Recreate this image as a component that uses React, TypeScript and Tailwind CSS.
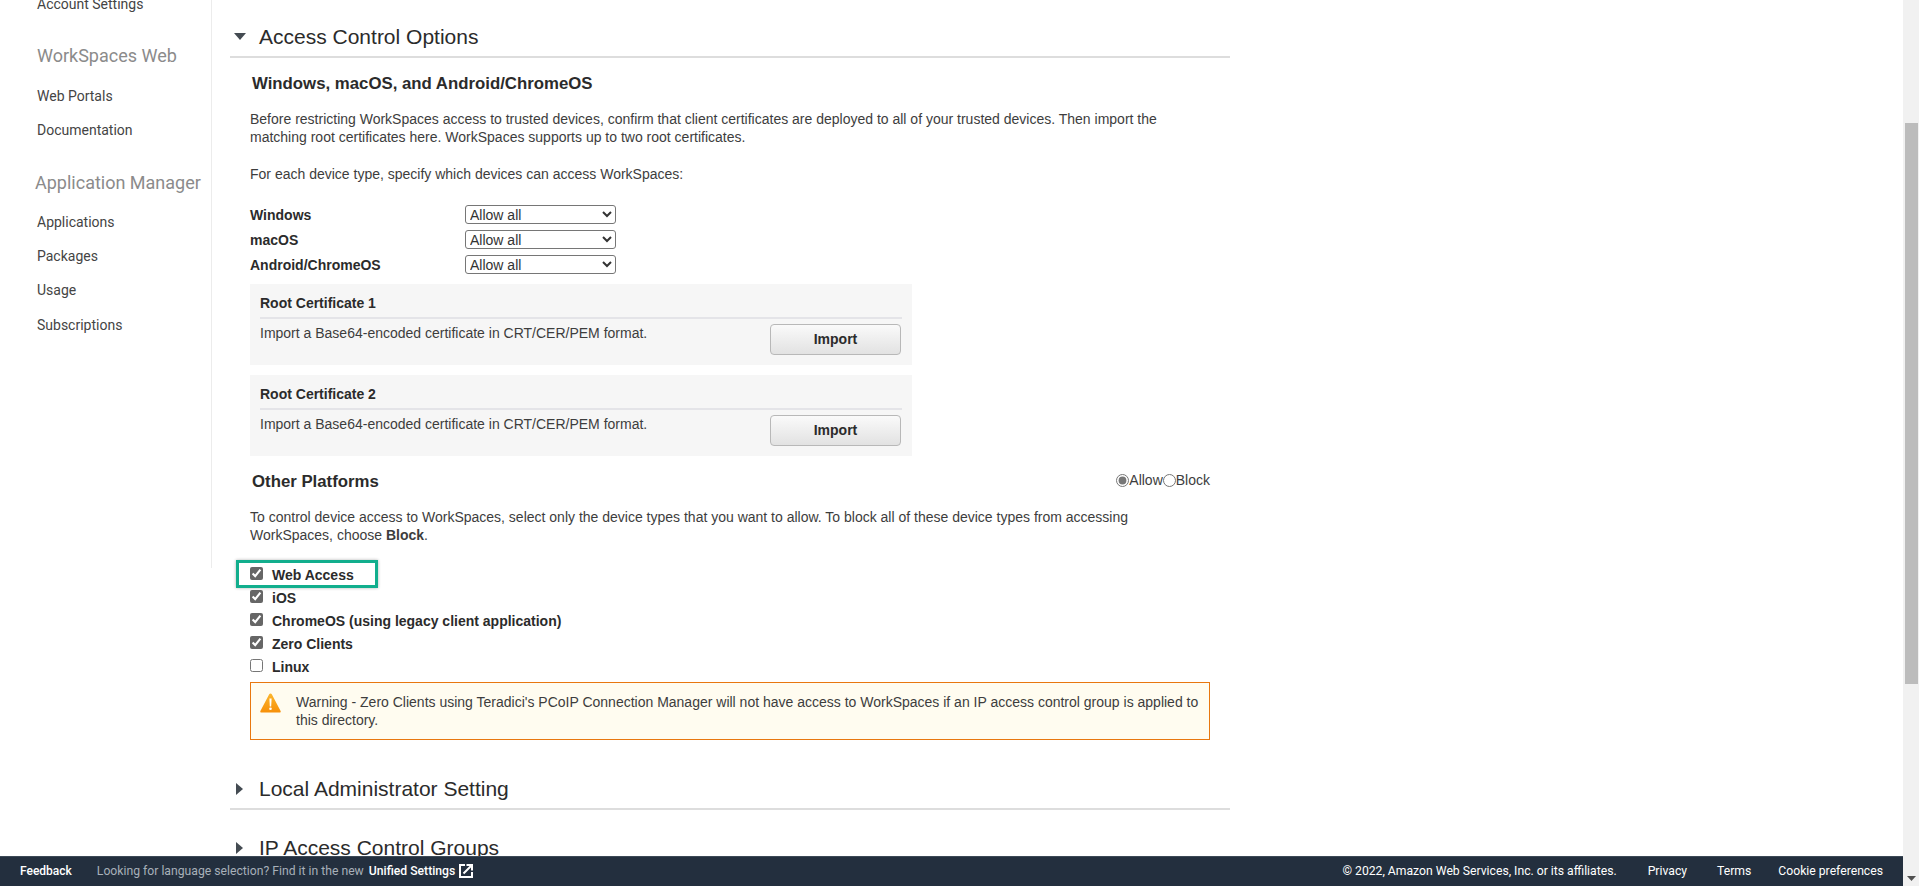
const sans = "font-['Liberation_Sans',Arial,sans-serif]";

const SectionHeader = ({ title, open }: { title: string; open?: boolean }) => (
  <div className="flex h-[41px] items-center border-b-2 border-[#dddddd]">
    <div className="flex w-[19px] justify-center">
      {open ? (
        <svg width="12" height="7" viewBox="0 0 12 7"><path d="M0 0h12L6 7z" fill="#444b52" /></svg>
      ) : (
        <svg width="7" height="12" viewBox="0 0 7 12"><path d="M0 0v12l7-6z" fill="#444b52" /></svg>
      )}
    </div>
    <h2 className={`ml-[10px] text-[21px] text-[#2b2b2b] ${sans}`}>{title}</h2>
  </div>
);

const SubHeading = ({ children }: { children: React.ReactNode }) => (
  <h3 className="h-5 pt-px pl-[2px] text-[16.8px] leading-5 font-bold text-[#2b2b2b]">{children}</h3>
);

const SelectRow = ({ label }: { label: string }) => (
  <div className="flex h-[25px] items-center">
    <span className="w-[215px] text-[14px] font-bold text-[#2b2b2b]">{label}</span>
    <select className="h-[19px] w-[151px] rounded-[3px] border border-[#767676] bg-white text-[14px] leading-4 text-[#333]">
      <option>Allow all</option>
    </select>
  </div>
);

const CertBox = ({ title }: { title: string }) => (
  <div className="h-[81px] w-[662px] bg-[#f6f6f6] px-[10px]">
    <div className="flex h-[35px] items-center border-b-2 border-[#e4e4e8] pt-[5px] text-[14px] font-bold text-[#2b2b2b]">{title}</div>
    <div className="flex justify-between pr-[1px]">
      <p className="mt-[5px] text-[14px] leading-[18px] text-[#3d3d3d]">Import a Base64-encoded certificate in CRT/CER/PEM format.</p>
      <button className="mt-[5px] h-[31px] w-[131px] rounded-[4px] border border-[#b8b8b8] bg-gradient-to-b from-[#fafafa] to-[#e2e2e2] pb-px text-[14px] font-bold text-[#2b2b2b]">
        Import
      </button>
    </div>
  </div>
);

const platforms = [
  { name: 'Web Access', checked: true },
  { name: 'iOS', checked: true },
  { name: 'ChromeOS (using legacy client application)', checked: true },
  { name: 'Zero Clients', checked: true },
  { name: 'Linux', checked: false },
];

const SideLink = ({ children }: { children: React.ReactNode }) => (
  <div className="h-[34px] pl-[37px] text-[14px] leading-[34px] text-[#444]">{children}</div>
);

const SideHeading = ({ children, className }: { children: React.ReactNode; className: string }) => (
  <div className={`h-[30px] text-[18px] leading-[30px] text-[#8b8b8b] ${className}`}>{children}</div>
);

const Sidebar = () => (
  <aside className="-mt-[13px] h-[581px] w-[212px] shrink-0 border-r border-[#ececec] font-['Roboto',sans-serif]">
    <SideLink>Account Settings</SideLink>
    <SideHeading className="mt-5 mb-2 pl-[37px]">WorkSpaces Web</SideHeading>
    <SideLink>Web Portals</SideLink>
    <SideLink>Documentation</SideLink>
    <SideHeading className="mt-[21px] mb-[7px] pl-[35px]">Application Manager</SideHeading>
    <SideLink>Applications</SideLink>
    <SideLink>Packages</SideLink>
    <SideLink>Usage</SideLink>
    <div className="mt-px">
      <SideLink>Subscriptions</SideLink>
    </div>
  </aside>
);

const WarningIcon = () => (
  <svg width="21" height="20" viewBox="0 0 21 20">
    <defs>
      <linearGradient id="warn" x1="0" y1="0" x2="0" y2="1">
        <stop offset="0" stopColor="#fbb62e" />
        <stop offset="1" stopColor="#f79009" />
      </linearGradient>
    </defs>
    <path d="M10.5 0.5c.6 0 1 .3 1.3.8l8.8 16.6c.4.8 0 1.6-.9 1.6H1.3c-.9 0-1.3-.8-.9-1.6L9.2 1.3c.3-.5.7-.8 1.3-.8z" fill="url(#warn)" />
    <path d="M9.4 5.5h2.2l-.4 8h-1.4z" fill="#fff" />
    <circle cx="10.5" cy="15.8" r="1.3" fill="#fff" />
  </svg>
);

const Footer = () => (
  <footer className="flex h-[30px] shrink-0 items-center justify-between border-t border-[#3c4956] bg-[#232f3e] px-5 font-['Roboto',sans-serif] text-[12.2px] text-white">
    <div className="flex items-center">
      <span className="text-[12px] font-medium">Feedback</span>
      <span className="ml-[25px] text-[#a7b0b9]">Looking for language selection? Find it in the new</span>
      <span className="ml-[5px] font-medium">Unified Settings</span>
      <svg className="ml-1" width="14" height="14" viewBox="0 0 14 14" fill="none" stroke="#fff" strokeWidth="2">
        <path d="M6 1H1v12h12V8" />
        <path d="M4.5 9.5L12.5 1.5M7.5 1h5.5v5.5" />
      </svg>
    </div>
    <div className="flex items-center">
      <span>© 2022, Amazon Web Services, Inc. or its affiliates.</span>
      <span className="ml-[31px]">Privacy</span>
      <span className="ml-[30px]">Terms</span>
      <span className="ml-[27px]">Cookie preferences</span>
    </div>
  </footer>
);

export default function App() {
  return (
    <div className={`flex h-[886px] overflow-hidden bg-white ${sans}`}>
      <div className="flex min-w-0 flex-1 flex-col">
        <div className="flex min-h-0 flex-1 overflow-hidden">
          <Sidebar />
          <main className="ml-[18px] w-[1000px] shrink-0 pt-[17px]">
            <SectionHeader title="Access Control Options" open />
            <div className="pl-5 text-[14px] leading-[18px] text-[#3d3d3d]">
              <div className="mt-[15px]">
                <SubHeading>Windows, macOS, and Android/ChromeOS</SubHeading>
              </div>
              <p className="mt-[17px] w-[950px]">
                Before restricting WorkSpaces access to trusted devices, confirm that client certificates are deployed to all of your trusted devices. Then import the matching root certificates here. WorkSpaces supports up to two root certificates.
              </p>
              <p className="mt-[19px]">For each device type, specify which devices can access WorkSpaces:</p>
              <div className="mt-[19px]">
                <SelectRow label="Windows" />
                <SelectRow label="macOS" />
                <SelectRow label="Android/ChromeOS" />
              </div>
              <div className="mt-[7px] flex flex-col gap-[10px]">
                <CertBox title="Root Certificate 1" />
                <CertBox title="Root Certificate 2" />
              </div>
              <div className="mt-[15px] flex h-5 w-[960px] items-center justify-between">
                <SubHeading>Other Platforms</SubHeading>
                <div className="mb-[2px] flex items-center text-[14px] text-[#3d3d3d]">
                  <input type="radio" name="other" defaultChecked className="m-0 h-[13px] w-[13px] accent-[#777]" />
                  <span>Allow</span>
                  <input type="radio" name="other" className="m-0 h-[13px] w-[13px] accent-[#777]" />
                  <span>Block</span>
                </div>
              </div>
              <p className="mt-[17px] w-[950px]">
                To control device access to WorkSpaces, select only the device types that you want to allow. To block all of these device types from accessing WorkSpaces, choose <b>Block</b>.
              </p>
              <div className="relative mt-[18px]">
                {platforms.map((p) => (
                  <label key={p.name} className="flex h-[23px] items-center text-[14px] font-bold text-[#2b2b2b]">
                    <input type="checkbox" defaultChecked={p.checked} className="m-0 mr-[9px] h-[13px] w-[13px] accent-[#666]" />
                    <span className="pt-[2px]">{p.name}</span>
                  </label>
                ))}
                <div className="absolute -top-[2px] -left-[14px] h-[28px] w-[142px] border-[3px] border-[#12ae8d] shadow-[0_0_3px_rgba(0,0,0,0.3)]" />
              </div>
              <div className="mt-[5px] flex h-[58px] w-[960px] items-center border border-[#e8770f] bg-[#fffcf0] pl-[9px]">
                <div className="mb-[17px] shrink-0">
                  <WarningIcon />
                </div>
                <p className="ml-[15px] w-[920px]">
                  Warning - Zero Clients using Teradici's PCoIP Connection Manager will not have access to WorkSpaces if an IP access control group is applied to this directory.
                </p>
              </div>
            </div>
            <div className="mt-[29px]">
              <SectionHeader title="Local Administrator Setting" />
            </div>
            <div className="mt-[18px]">
              <SectionHeader title="IP Access Control Groups" />
            </div>
          </main>
        </div>
        <Footer />
      </div>
      <div className="flex w-4 shrink-0 flex-col items-end bg-[#f1f1f1]">
        <div className="mt-[123px] mr-px h-[561px] w-[13px] bg-[#bcbcbc]" />
        <div className="mt-auto mr-[3px] mb-[5px]">
          <svg width="9" height="5" viewBox="0 0 9 5"><path d="M0 0h9L4.5 5z" fill="#505050" /></svg>
        </div>
      </div>
    </div>
  );
}
